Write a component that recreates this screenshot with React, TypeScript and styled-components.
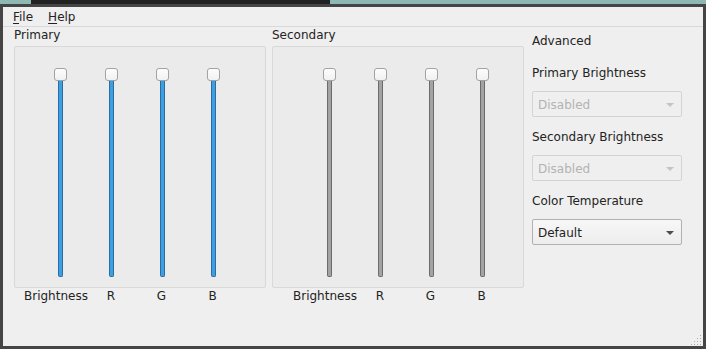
import React from 'react';
import styled, { createGlobalStyle } from 'styled-components';

const GlobalStyle = createGlobalStyle`
  html, body {
    margin: 0;
    padding: 0;
    overflow: hidden;
    background: #222222;
  }
  #root {
    width: 706px;
    height: 349px;
  }
`;

const Screen = styled.div`
  width: 706px;
  height: 349px;
  display: flex;
  flex-direction: column;
  font-family: 'DejaVu Sans', 'Liberation Sans', sans-serif;
  font-size: 12px;
  color: #232323;
`;

const Desktop = styled.div`
  display: flex;
  height: 4px;
  flex: none;
`;

const DesktopStrip = styled.div<{ $w?: number; $dark?: boolean }>`
  width: ${(p) => (p.$w ? `${p.$w}px` : 'auto')};
  flex: ${(p) => (p.$w ? 'none' : '1')};
  background: ${(p) => (p.$dark ? '#222222' : '#8db8b4')};
`;

const Window = styled.div`
  position: relative;
  flex: 1;
  box-sizing: border-box;
  border: 3px solid #454545;
  background: #efefef;
  display: flex;
  flex-direction: column;
`;

const MenuBar = styled.div`
  display: flex;
  height: 19px;
  line-height: 20px;
  padding-left: 10px;
  gap: 15px;
  border-bottom: 1px solid #d9d9d9;
`;

const MenuItem = styled.span`
  u {
    text-decoration: underline;
    text-underline-offset: 2px;
  }
`;

const Main = styled.div`
  display: flex;
  padding-left: 11px;
`;

const Column = styled.div<{ $w: number; $gap: number }>`
  width: ${(p) => p.$w}px;
  margin-right: ${(p) => p.$gap}px;
  display: flex;
  flex-direction: column;
`;

const Label = styled.div`
  line-height: 16px;
  white-space: nowrap;
`;

const Frame = styled.div<{ $inset: number }>`
  margin-top: 3px;
  box-sizing: border-box;
  height: 242px;
  border: 1px solid #d9d9d9;
  border-radius: 2px;
  background: #ebebeb;
  padding: 21px 0 0 ${(p) => p.$inset}px;
  display: grid;
  grid-template-columns: repeat(4, 51px);
  align-items: start;
`;

const Slider = styled.div`
  display: flex;
  flex-direction: column;
  align-items: center;
`;

const Handle = styled.div`
  box-sizing: border-box;
  width: 13px;
  height: 13px;
  border: 1px solid #a3a3a3;
  border-radius: 3px;
  background: linear-gradient(#fdfdfd, #f1f1f1);
`;

const Track = styled.div<{ $tone: 'blue' | 'grey' }>`
  box-sizing: border-box;
  width: 5px;
  height: 196px;
  border: 1px solid ${(p) => (p.$tone === 'blue' ? '#2a6d9e' : '#6b6b6b')};
  border-top: none;
  border-radius: 0 0 2px 2px;
  background: ${(p) => (p.$tone === 'blue' ? '#3d9fe3' : '#a3a3a3')};
`;

const Captions = styled.div<{ $inset: number }>`
  display: grid;
  grid-template-columns: 62px 50px 51px 51px;
  padding-left: ${(p) => p.$inset}px;
  line-height: 16px;
`;

const Caption = styled.div`
  text-align: center;
  white-space: nowrap;
`;

const Side = styled.div`
  width: 150px;
  padding-top: 6px;
  display: flex;
  flex-direction: column;
`;

const SideField = styled.div`
  display: flex;
  flex-direction: column;
  gap: 10px;
  margin-top: 16px;
  & + & {
    margin-top: 12px;
  }
`;

const Combo = styled.div<{ $disabled?: boolean }>`
  box-sizing: border-box;
  height: 26px;
  border: 1px solid ${(p) => (p.$disabled ? '#d3d3d3' : '#b1b1b1')};
  border-radius: 2px;
  background: ${(p) => (p.$disabled ? '#efefef' : 'linear-gradient(#f7f7f7, #ededed)')};
  color: ${(p) => (p.$disabled ? '#b3b3b3' : '#232323')};
  display: flex;
  align-items: center;
  justify-content: space-between;
  padding: 1px 7px 0 5px;
`;

const Arrow = styled.div<{ $disabled?: boolean }>`
  width: 0;
  height: 0;
  border-left: 4px solid transparent;
  border-right: 4px solid transparent;
  border-top: 4px solid ${(p) => (p.$disabled ? '#c4c4c4' : '#4d4d4d')};
`;

const Grip = styled.svg`
  position: absolute;
  right: 1px;
  bottom: 0px;
`;

type Tone = 'blue' | 'grey';

function SliderGroup({ title, tone, inset, captionInset, w, gap }: {
  title: string; tone: Tone; inset: number; captionInset: number; w: number; gap: number;
}) {
  const names = ['Brightness', 'R', 'G', 'B'];
  return (
    <Column $w={w} $gap={gap}>
      <Label>{title}</Label>
      <Frame $inset={inset}>
        {names.map((n) => (
          <Slider key={n}>
            <Handle />
            <Track $tone={tone} />
          </Slider>
        ))}
      </Frame>
      <Captions $inset={captionInset}>
        {names.map((n) => (
          <Caption key={n}>{n}</Caption>
        ))}
      </Captions>
    </Column>
  );
}

function Field({ label, value, disabled }: { label: string; value: string; disabled?: boolean }) {
  return (
    <SideField>
      <Label>{label}</Label>
      <Combo $disabled={disabled}>
        <span>{value}</span>
        <Arrow $disabled={disabled} />
      </Combo>
    </SideField>
  );
}

export default function App() {
  const dots: [number, number][] = [];
  for (let r = 0; r < 4; r++) {
    for (let c = 3 - r; c < 4; c++) dots.push([c * 3, r * 3]);
  }
  return (
    <>
      <GlobalStyle />
      <Screen>
        <Desktop>
          <DesktopStrip $w={31} />
          <DesktopStrip $w={299} $dark />
          <DesktopStrip />
        </Desktop>
        <Window>
          <MenuBar>
            <MenuItem><u>F</u>ile</MenuItem>
            <MenuItem><u>H</u>elp</MenuItem>
          </MenuBar>
          <Main>
            <SliderGroup title="Primary" tone="blue" inset={20} captionInset={10} w={252} gap={6} />
            <SliderGroup title="Secondary" tone="grey" inset={31} captionInset={21} w={252} gap={8} />
            <Side>
              <Label>Advanced</Label>
              <Field label="Primary Brightness" value="Disabled" disabled />
              <Field label="Secondary Brightness" value="Disabled" disabled />
              <Field label="Color Temperature" value="Default" />
            </Side>
          </Main>
          <Grip width="11" height="11" viewBox="0 0 11 11">
            {dots.map(([x, y]) => (
              <rect key={`${x}-${y}`} x={x} y={y} width="1" height="1" fill="#ababab" />
            ))}
          </Grip>
        </Window>
      </Screen>
    </>
  );
}
